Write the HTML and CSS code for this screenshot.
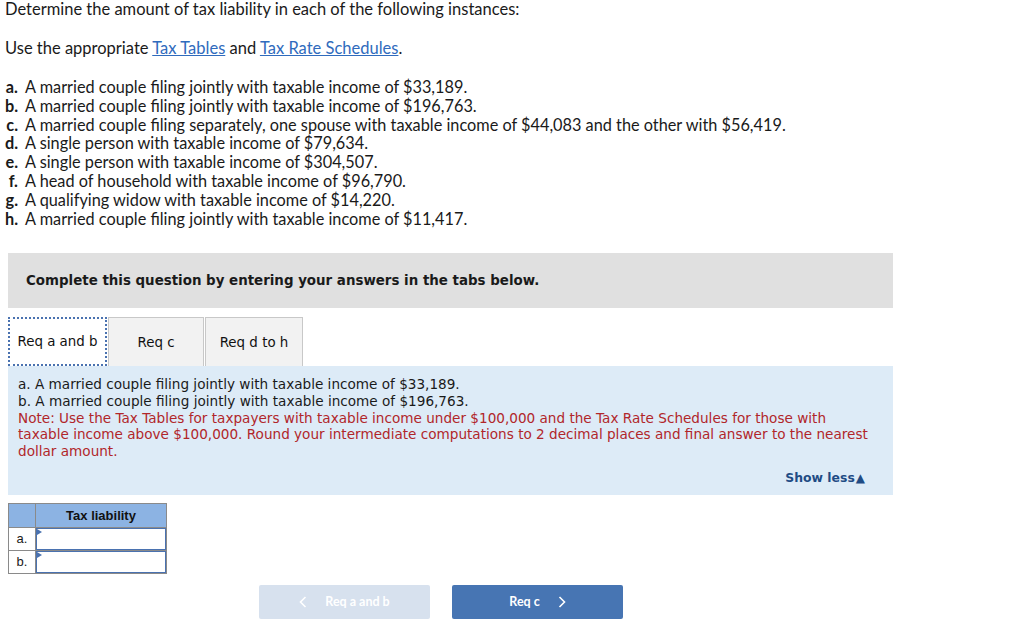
FILE: index.html
```html
<!DOCTYPE html>
<html>
<head>
  <title>Tax Liability</title>
  <link rel="stylesheet" href="styles.css">
</head>
<body>
  <div class="question">
    <p class="intro">Determine the amount of tax liability in each of the following instances:</p>
    <p class="intro">Use the appropriate <a href="#" class="link">Tax Tables</a> and <a href="#" class="link">Tax Rate Schedules</a>.</p>

    <ul class="cases">
      <li><span class="letter">a.</span>A married couple filing jointly with taxable income of $33,189.</li>
      <li><span class="letter">b.</span>A married couple filing jointly with taxable income of $196,763.</li>
      <li><span class="letter">c.</span>A married couple filing separately, one spouse with taxable income of $44,083 and the other with $56,419.</li>
      <li><span class="letter">d.</span>A single person with taxable income of $79,634.</li>
      <li><span class="letter">e.</span>A single person with taxable income of $304,507.</li>
      <li><span class="letter">f.</span>A head of household with taxable income of $96,790.</li>
      <li><span class="letter">g.</span>A qualifying widow with taxable income of $14,220.</li>
      <li><span class="letter">h.</span>A married couple filing jointly with taxable income of $11,417.</li>
    </ul>
  </div>

  <div class="work-area">
    <div class="banner">Complete this question by entering your answers in the tabs below.</div>

    <div class="tabs">
      <button class="tab active">Req a and b</button>
      <button class="tab">Req c</button>
      <button class="tab">Req d to h</button>
    </div>

    <div class="tab-panel">
      <div class="panel-text">
        a. A married couple filing jointly with taxable income of $33,189.<br>
        b. A married couple filing jointly with taxable income of $196,763.
      </div>
      <div class="note">Note: Use the Tax Tables for taxpayers with taxable income under $100,000 and the Tax Rate Schedules for those with taxable income above $100,000. Round your intermediate computations to 2 decimal places and final answer to the nearest dollar amount.</div>
      <div class="show-less">Show less<span class="arrow">&#9650;</span></div>
    </div>

    <table class="answer-table">
      <tr>
        <th class="row-head"></th>
        <th>Tax liability</th>
      </tr>
      <tr>
        <td class="row-label">a.</td>
        <td class="input-cell"><span class="flag"></span></td>
      </tr>
      <tr>
        <td class="row-label">b.</td>
        <td class="input-cell"><span class="flag"></span></td>
      </tr>
    </table>

    <div class="nav">
      <button class="nav-btn disabled">
        <svg width="8" height="12" viewBox="0 0 8 12"><path d="M6.5 1 L1.5 6 L6.5 11" fill="none" stroke="currentColor" stroke-width="1.6"/></svg>
        Req a and b
      </button>
      <button class="nav-btn">
        Req c
        <svg width="8" height="12" viewBox="0 0 8 12"><path d="M1.5 1 L6.5 6 L1.5 11" fill="none" stroke="currentColor" stroke-width="1.6"/></svg>
      </button>
    </div>
  </div>
</body>
</html>
```

FILE: styles.css
```css
:root {
  --text: #1a1a1a;
  --link: #2f6bbd;
  --banner: #e0e0e0;
  --panel: #ddebf7;
  --note: #b1262a;
  --tab-border: #c8c8c8;
  --head: #8cb3e3;
  --btn: #4775b3;
  --btn-off: #d7e1ee;
}

body {
  margin: 0;
  padding: 0 5px;
  font-family: Lato, "Liberation Sans", sans-serif;
  color: var(--text);
  background: #fff;
}

.intro {
  font-size: 16.5px;
  line-height: 18px;
  margin: 0 0 21px;
}

.link {
  color: var(--link);
  text-decoration: underline;
}

.cases {
  list-style: none;
  margin: 1px 0 0;
  padding: 0;
  font-size: 16.3px;
  line-height: 18.8px;
}

.cases li {
  display: flex;
}

.letter {
  width: 13px;
  text-align: right;
  font-weight: 700;
  margin-right: 7px;
}

.work-area {
  margin-top: 25px;
  padding-left: 3px;
  width: 885px;
}

.banner {
  background: var(--banner);
  height: 55px;
  display: flex;
  align-items: center;
  padding-left: 18px;
  font-family: "DejaVu Sans", Verdana, sans-serif;
  font-weight: 700;
  font-size: 13.4px;
}

.tabs {
  display: flex;
  margin-top: 9px;
  height: 49px;
}

.tab {
  font-family: "DejaVu Sans", Verdana, sans-serif;
  font-size: 13.4px;
  color: #111;
  background: #f2f2f2;
  border: 1px solid var(--tab-border);
  border-bottom: none;
  margin-right: 1px;
  padding: 0;
  cursor: pointer;
}

.tab:nth-child(1) { width: 99px; }
.tab:nth-child(2) { width: 96px; }
.tab:nth-child(3) { width: 98px; }

.tab.active {
  background: #fff;
  border: 2px dotted #4a72b0;
}

.tab-panel {
  background: var(--panel);
  padding: 10px 22px 9px 10px;
  font-family: "DejaVu Sans", Verdana, sans-serif;
  font-size: 13.6px;
  line-height: 16.7px;
}

.note {
  color: var(--note);
}

.show-less {
  text-align: right;
  margin-top: 10px;
  margin-right: 6px;
  font-weight: 700;
  font-size: 12.4px;
  line-height: 16px;
  color: #1f4b85;
}

.arrow {
  font-size: 12px;
  margin-left: 1px;
}

.answer-table {
  margin-top: 8px;
  border-collapse: collapse;
  font-family: "Liberation Sans", Arial, sans-serif;
  font-size: 13px;
}

.answer-table th {
  background: var(--head);
  border: 1px solid #8a8a8a;
  height: 23px;
  width: 130px;
  padding: 0;
  font-weight: 700;
  color: #111;
}

.answer-table th.row-head {
  width: 26px;
}

.answer-table td {
  border: 1px solid #8a8a8a;
  height: 22px;
  padding: 0;
}

.row-label {
  text-align: center;
}

.input-cell {
  position: relative;
  background: #fff;
  box-shadow: inset 0 0 0 1px #4a72b0;
}

.flag {
  position: absolute;
  top: 1px;
  left: 1px;
  border-left: 5px solid #4a72b0;
  border-top: 3px solid transparent;
  border-bottom: 3px solid transparent;
}

.nav {
  display: flex;
  gap: 22px;
  margin-top: 11px;
  padding-left: 251px;
}

.nav-btn {
  width: 171px;
  height: 34px;
  border: none;
  border-radius: 2px;
  background: var(--btn);
  color: #fff;
  font-family: Lato, "Liberation Sans", sans-serif;
  font-weight: 700;
  font-size: 12.5px;
  display: flex;
  align-items: center;
  justify-content: center;
  gap: 18px;
  cursor: pointer;
}

.nav-btn.disabled {
  background: var(--btn-off);
}
```
